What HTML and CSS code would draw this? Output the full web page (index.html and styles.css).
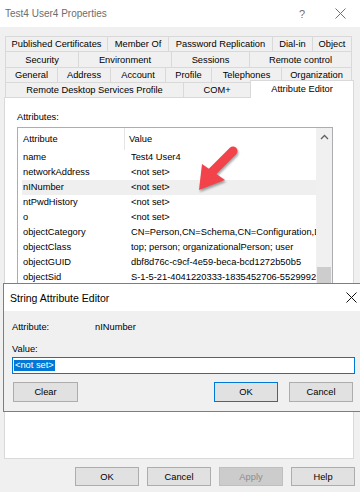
FILE: index.html
```html
<!DOCTYPE html>
<html lang="en">
<head>
    <meta charset="UTF-8">
    <title>Test4 User4 Properties</title>
    <link rel="stylesheet" href="styles.css">
</head>
<body>

    <div class="titlebar">
        <span class="title">Test4 User4 Properties</span>
        <span class="help">?</span>
        <span class="close">
            <svg width="11" height="11" viewBox="0 0 11 11"><path d="M0.5 0.5 L10.5 10.5 M10.5 0.5 L0.5 10.5" stroke="#707070" stroke-width="1" fill="none"/></svg>
        </span>
    </div>

    <!-- Property sheet tabs, 4 stacked rows -->
    <div class="tabs">
        <div class="tab-row row1">
            <div class="tab">Published Certificates</div>
            <div class="tab">Member Of</div>
            <div class="tab">Password Replication</div>
            <div class="tab">Dial-in</div>
            <div class="tab">Object</div>
        </div>
        <div class="tab-row row2">
            <div class="tab">Security</div>
            <div class="tab">Environment</div>
            <div class="tab">Sessions</div>
            <div class="tab">Remote control</div>
        </div>
        <div class="tab-row row3">
            <div class="tab">General</div>
            <div class="tab">Address</div>
            <div class="tab">Account</div>
            <div class="tab">Profile</div>
            <div class="tab">Telephones</div>
            <div class="tab">Organization</div>
        </div>
        <div class="tab-row row4">
            <div class="tab">Remote Desktop Services Profile</div>
            <div class="tab">COM+</div>
            <div class="tab selected">Attribute Editor</div>
        </div>
    </div>

    <div class="panel">
        <div class="panel-label">Attributes:</div>
        <div class="attr-list">
            <div class="list-body">
                <div class="list-head">
                    <div class="head-cell first">Attribute</div>
                    <div class="head-cell">Value</div>
                </div>
                <div class="list-row"><span>name</span><span>Test4 User4</span></div>
                <div class="list-row"><span>networkAddress</span><span>&lt;not set&gt;</span></div>
                <div class="list-row hot"><span>nINumber</span><span>&lt;not set&gt;</span></div>
                <div class="list-row"><span>ntPwdHistory</span><span>&lt;not set&gt;</span></div>
                <div class="list-row"><span>o</span><span>&lt;not set&gt;</span></div>
                <div class="list-row"><span>objectCategory</span><span>CN=Person,CN=Schema,CN=Configuration,D</span></div>
                <div class="list-row"><span>objectClass</span><span>top; person; organizationalPerson; user</span></div>
                <div class="list-row"><span>objectGUID</span><span>dbf8d76c-c9cf-4e59-beca-bcd1272b50b5</span></div>
                <div class="list-row"><span>objectSid</span><span>S-1-5-21-4041220333-1835452706-5529992</span></div>
            </div>
            <div class="scrollbar">
                <div class="scroll-up">
                    <svg width="9" height="6" viewBox="0 0 9 6"><path d="M1 5 L4.5 1.5 L8 5" stroke="#606060" stroke-width="1.3" fill="none"/></svg>
                </div>
                <div class="thumb"></div>
            </div>
        </div>
    </div>

    <div class="footer">
        <button class="btn">OK</button>
        <button class="btn">Cancel</button>
        <button class="btn disabled">Apply</button>
        <button class="btn">Help</button>
    </div>

    <!-- String Attribute Editor popup, sits over the property sheet -->
    <div class="editor">
        <div class="editor-titlebar">
            <span class="editor-title">String Attribute Editor</span>
            <span class="editor-close">
                <svg width="11" height="11" viewBox="0 0 11 11"><path d="M0.5 0.5 L10.5 10.5 M10.5 0.5 L0.5 10.5" stroke="#111" stroke-width="1" fill="none"/></svg>
            </span>
        </div>
        <div class="editor-body">
            <div class="editor-attr"><span class="attr-label">Attribute:</span><span>nINumber</span></div>
            <div class="editor-label">Value:</div>
            <div class="editor-input"><span class="sel">&lt;not set&gt;</span></div>
            <div class="editor-buttons">
                <button class="btn clear">Clear</button>
                <button class="btn default">OK</button>
                <button class="btn">Cancel</button>
            </div>
        </div>
    </div>

    <svg class="arrow" width="360" height="492" viewBox="0 0 360 492">
        <path d="M233 151 L212 172" stroke="#f2434b" stroke-width="9" stroke-linecap="round" fill="none"/>
        <polygon points="199,190 202,164 225,180" fill="#f2434b"/>
    </svg>

</body>
</html>
```

FILE: styles.css
```css
:root {
    --bg: #f0f0f0; --white: #ffffff; --line: #d9d9d9;
    --btn: #e1e1e1; --btn-border: #adadad; --blue: #0078d7;
}
* { box-sizing: border-box; }
body {
    margin: 0; width: 360px; height: 492px; overflow: hidden; position: relative;
    background: var(--bg); color: #000;
    font-family: "Liberation Sans", Arial, sans-serif; font-size: 9.3px;
}

.titlebar { height: 27px; background: var(--white); display: flex; align-items: center; padding-left: 5px; }
.title { flex: 1; font-size: 10px; color: #6d6d6d; }
.help { width: 20px; text-align: center; font-size: 11px; color: #707070; }
.close { width: 20px; margin-left: 18px; margin-right: 10px; display: flex; justify-content: center; }

.tabs { margin: 9px 0 0 5px; width: 348px; }
.tab-row { display: grid; height: 15px; }
.tab-row.row2 { height: 16px; }
.row1 { grid-template-columns: 103px 61px 104px 40px 39px; }
.row2 { grid-template-columns: 74px 93px 78px 102px; }
.row3 { grid-template-columns: 53px 53px 55px 46px 70px 70px; }
.row4 { grid-template-columns: 179px 67px 102px; }
.tab {
    border: 1px solid var(--line); border-width: 1px 1px 0 0;
    display: flex; align-items: center; justify-content: center; white-space: nowrap;
}
.tab:first-child { border-left-width: 1px; }
.tab.selected {
    background: var(--white); margin-top: -2px; margin-bottom: -1px; height: 18px;
    border-left-width: 1px; position: relative; z-index: 1; padding-bottom: 2px; margin-left: -1px; margin-right: -1px;
}

.panel {
    margin: 0 6px 0 4px; height: 362px; background: var(--white);
    border: 1px solid var(--line); padding: 12px 0 0 12px;
}
.panel-label { line-height: 14px; }
.attr-list {
    margin-top: 3px; width: 316px; height: 275px; border: 1px solid #abadb3;
    display: flex;
}
.list-body { flex: 1; overflow: hidden; }
.list-head { display: grid; grid-template-columns: 107px 1fr; height: 22px; }
.head-cell { display: flex; align-items: center; padding-left: 4px; }
.head-cell.first { padding-left: 5px; border-right: 1px solid #e5e5e5; }
.list-row {
    display: grid; grid-template-columns: 108px 1fr; height: 15px; line-height: 15px;
    margin-left: 4px; padding-left: 1px; white-space: nowrap; overflow: hidden;
}
.list-row span { overflow: hidden; }
.list-row.hot { background: #efefef; }

.scrollbar { width: 16px; background: var(--bg); display: flex; flex-direction: column; align-items: center; }
.scroll-up { height: 17px; width: 100%; display: flex; align-items: center; justify-content: center; }
.thumb { width: 14px; height: 40px; margin-top: 122px; background: #cdcdcd; }

.footer { display: flex; justify-content: flex-end; gap: 8px; margin-top: 8px; padding-right: 5px; }
.btn {
    width: 64px; height: 19px; padding: 0; background: var(--btn); border: 1px solid var(--btn-border);
    font-family: inherit; font-size: 9.3px; color: #000;
}
.btn.disabled { background: #cccccc; border-color: #bfbfbf; color: #8d8d8d; }

.editor {
    position: absolute; left: 3px; top: 283px; width: 360px; height: 129px;
    border: 1px solid #3a8ee0; background: var(--bg);
}
.editor-titlebar { height: 27px; background: var(--white); display: flex; align-items: center; padding-left: 6px; }
.editor-title { flex: 1; font-size: 10.5px; }
.editor-close { width: 20px; display: flex; justify-content: center; margin-right: 1px; }
.editor-body { padding: 9px 0 0 8px; }
.editor-attr { display: flex; line-height: 14px; }
.attr-label { width: 83px; }
.editor-label { margin-top: 8px; line-height: 14px; }
.editor-input {
    margin-top: 1px; width: 343px; height: 17px; background: var(--white);
    border: 1px solid var(--blue); padding: 2px 0 0 1px;
}
.sel { background: var(--blue); color: var(--white); padding: 0 1px; line-height: 11px; display: inline-block; }
.editor-buttons { display: flex; margin-top: 8px; width: 341px; }
.editor-buttons .btn { height: 20px; }
.btn.clear { width: 65px; margin-left: 1px; margin-right: auto; }
.btn.default { border-color: var(--blue); margin-right: 11px; }

.arrow { position: absolute; left: 0; top: 0; pointer-events: none; filter: drop-shadow(1px 2px 1px rgba(0,0,0,0.35)); }
```
